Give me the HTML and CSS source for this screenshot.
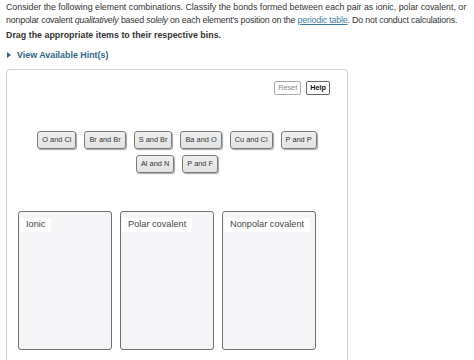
FILE: index.html
```html
<!DOCTYPE html>
<html>
<head>
<meta charset="utf-8">
<link rel="stylesheet" href="styles.css">
</head>
<body>
<div class="page">
  <p class="intro">Consider the following element combinations. Classify the bonds formed between each pair as ionic, polar covalent, or<br><span class="tight">nonpolar covalent <i>qualitatively</i> based <i>solely</i> on each element's position on the <a href="#" class="link">periodic table</a>. Do not conduct calculations.</span></p>
  <p class="instr">Drag the appropriate items to their respective bins.</p>
  <div class="hint"><span class="tri"></span>View Available Hint(s)</div>
  <div class="panel">
    <div class="toolbar">
      <span class="btn reset">Reset</span>
      <span class="btn help">Help</span>
    </div>
    <div class="items">
      <span class="item">O and Cl</span>
      <span class="item">Br and Br</span>
      <span class="item">S and Br</span>
      <span class="item">Ba and O</span>
      <span class="item">Cu and Cl</span>
      <span class="item">P and P</span>
      <span class="item">Al and N</span>
      <span class="item">P and F</span>
    </div>
    <div class="bins">
      <div class="bin"><span class="bin-label">Ionic</span></div>
      <div class="bin"><span class="bin-label">Polar covalent</span></div>
      <div class="bin"><span class="bin-label">Nonpolar covalent</span></div>
    </div>
  </div>
</div>
</body>
</html>
```

FILE: styles.css
```css
html, body {
  margin: 0;
  padding: 0;
  background: #ffffff;
}
body {
  font-family: "Liberation Sans", Arial, sans-serif;
  color: #333333;
  overflow: hidden;
}
.page {
  padding: 0 0 0 6px;
}
.intro {
  margin: 0;
  padding-top: 1px;
  font-size: 8.8px;
  line-height: 13px;
  white-space: nowrap;
}
.tight {
  letter-spacing: -0.17px;
}
.link {
  color: #3b7ba8;
  text-decoration: underline;
}
.instr {
  margin: 2px 0 0 0;
  font-size: 8.9px;
  font-weight: bold;
  line-height: 12px;
  color: #333;
}
.hint {
  margin-top: 8px;
  font-size: 8.9px;
  font-weight: bold;
  color: #2e6586;
  display: flex;
  align-items: center;
  line-height: 12px;
}
.tri {
  width: 0;
  height: 0;
  border-left: 4px solid #2e6586;
  border-top: 3px solid transparent;
  border-bottom: 3px solid transparent;
  margin-right: 6px;
  margin-left: 1px;
}
.panel {
  margin-top: 8px;
  width: 342px;
  height: 320px;
  border: 1px solid #cfcfcf;
  border-radius: 4px;
  box-sizing: border-box;
}
.toolbar {
  display: flex;
  justify-content: flex-end;
  gap: 5px;
  padding: 11px 17px 0 0;
}
.btn {
  font-size: 7.3px;
  line-height: 12px;
  padding: 0 3px;
  border: 1px solid #aaaaaa;
  border-radius: 2px;
  background: #fff;
}
.reset {
  color: #888;
}
.help {
  color: #111;
  font-weight: bold;
  border-color: #666;
}
.items {
  margin: 36px auto 0;
  width: 300px;
  display: flex;
  flex-wrap: wrap;
  justify-content: center;
  gap: 6px 8px;
}
.item {
  font-size: 7.4px;
  line-height: 16px;
  padding: 0 4px;
  color: #333;
  border: 1px solid #7a7a7a;
  border-radius: 3px;
  background: linear-gradient(#efefef, #e2e2e2);
  box-shadow: 1px 1px 1px rgba(0,0,0,0.35);
}
.bins {
  display: flex;
  gap: 8px;
  padding: 38px 0 0 11px;
}
.bin {
  width: 94px;
  height: 139px;
  box-sizing: border-box;
  border: 1px solid #6f6f6f;
  border-radius: 3px;
  background: #f5f5f7;
  padding: 1px 0 0 1px;
}
.bin-label {
  display: inline-block;
  background: #fff;
  font-size: 9.2px;
  line-height: 12px;
  padding: 0 6px 2px 6px;
  color: #444;
}
```
